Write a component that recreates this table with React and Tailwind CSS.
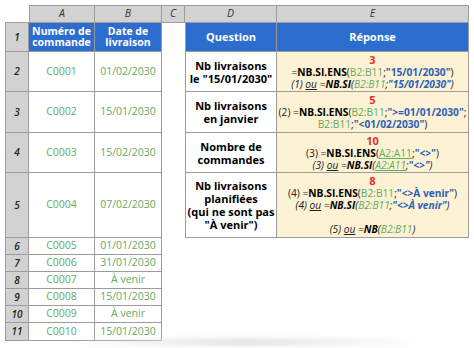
import React from "react";

const F = { fontFamily: '"Open Sans", "DejaVu Sans", sans-serif' };

const G = ({ children }) => <span className="text-[#62aa62]">{children}</span>;
const GU = ({ children }) => <span className="text-[#62aa62] underline">{children}</span>;
const Q = ({ children }) => <span className="text-[#2c5fb8] font-bold">{children}</span>;
const B = ({ children }) => <span className="font-bold text-black">{children}</span>;
const R = ({ children }) => <div className="text-[#e3302b] font-bold text-[11px]">{children}</div>;
const OU = () => <span className="underline">ou</span>;

const hdr = "bg-[#d2d2d2] border-t border-r border-[#9c9c9c] flex items-center justify-center italic text-[10.5px] text-[#333]";
const rn = "bg-[#d2d2d2] border-l border-r border-b border-[#9c9c9c] flex items-center justify-center italic font-semibold text-[10px] text-[#222]";
const cell = "border-r border-b border-[#9c9c9c] flex items-center justify-center text-[10.5px] text-[#62aa62] bg-white";
const dcell = "border-l border-r border-b border-[#9c9c9c] flex items-center justify-center text-center font-bold text-[11px] leading-[13px] text-black bg-white";
const ecell = "border-r border-b border-[#9c9c9c] flex flex-col items-center justify-center text-center text-[10.2px] leading-[12px] text-[#222] bg-[#fdf2d4] whitespace-nowrap";
const blue = "border-[#9c9c9c] bg-[#2e6dd0] text-white font-bold flex items-center justify-center text-center";

const rowsSmall = [
  ["6", "C0005", "01/01/2030"],
  ["7", "C0006", "31/01/2030"],
  ["8", "C0007", "À venir"],
  ["9", "C0008", "15/01/2030"],
  ["10", "C0009", "À venir"],
  ["11", "C0010", "15/01/2030"],
];

export default function App() {
  return (
    <div className="w-[474px] h-[348px] bg-white overflow-hidden" style={F}>
      <div className="pt-[5px] pl-[5px]">
        <div className="grid grid-cols-[24px_66px_67px_23px_92px_192px] grid-rows-[17px_30px_40px_41px_40px_65px_17px_17px_17px_17px_17px_18px]">
          {/* header row */}
          <div className="col-start-1 row-start-1" />
          <div className={`${hdr} col-start-2 row-start-1 border-l`}>A</div>
          <div className={`${hdr} col-start-3 row-start-1`}>B</div>
          <div className={`${hdr} col-start-4 row-start-1`}>C</div>
          <div className={`${hdr} col-start-5 row-start-1`}>D</div>
          <div className={`${hdr} col-start-6 row-start-1`}>E</div>

          {/* row 1 */}
          <div className={`${rn} col-start-1 row-start-2 border-t`}>1</div>
          <div className={`${blue} col-start-2 row-start-2 border-t border-r border-b text-[10.5px] leading-[11px]`}>Numéro de<br />commande</div>
          <div className={`${blue} col-start-3 row-start-2 border-t border-r border-b text-[10.5px] leading-[11px]`}>Date de<br />livraison</div>
          <div className="col-start-4 row-start-2 border-t border-[#9c9c9c] bg-white" />
          <div className={`${blue} col-start-5 row-start-2 border-t border-l border-r border-b text-[11px]`}>Question</div>
          <div className={`${blue} col-start-6 row-start-2 border-t border-r border-b text-[11px]`}>Réponse</div>

          {/* row 2 */}
          <div className={`${rn} col-start-1 row-start-3`}>2</div>
          <div className={`${cell} col-start-2 row-start-3`}>C0001</div>
          <div className={`${cell} col-start-3 row-start-3`}>01/02/2030</div>
          <div className={`${dcell} col-start-5 row-start-3`}>Nb livraisons<br />le "15/01/2030"</div>
          <div className={`${ecell} col-start-6 row-start-3`}>
            <R>3</R>
            <div>=<B>NB.SI.ENS</B>(<G>B2:B11</G>;<Q>"15/01/2030"</Q>)</div>
            <div className="italic">(1) <OU /> =<B>NB.SI</B>(<G>B2:B11</G>;<Q>"15/01/2030"</Q>)</div>
          </div>

          {/* row 3 */}
          <div className={`${rn} col-start-1 row-start-4`}>3</div>
          <div className={`${cell} col-start-2 row-start-4`}>C0002</div>
          <div className={`${cell} col-start-3 row-start-4`}>15/01/2030</div>
          <div className={`${dcell} col-start-5 row-start-4`}>Nb livraisons<br />en janvier</div>
          <div className={`${ecell} col-start-6 row-start-4`}>
            <R>5</R>
            <div>(2) =<B>NB.SI.ENS</B>(<G>B2:B11</G>;<Q>"&gt;=01/01/2030"</Q>;</div>
            <div><G>B2:B11</G>;<Q>"&lt;01/02/2030"</Q>)</div>
          </div>

          {/* row 4 */}
          <div className={`${rn} col-start-1 row-start-5`}>4</div>
          <div className={`${cell} col-start-2 row-start-5`}>C0003</div>
          <div className={`${cell} col-start-3 row-start-5`}>15/02/2030</div>
          <div className={`${dcell} col-start-5 row-start-5`}>Nombre de<br />commandes</div>
          <div className={`${ecell} col-start-6 row-start-5`}>
            <R>10</R>
            <div>(3) =<B>NB.SI.ENS</B>(<GU>A2:A11</GU>;<Q>"&lt;&gt;"</Q>)</div>
            <div className="italic">(3) <OU /> =<B>NB.SI</B>(<GU>A2:A11</GU>;<Q>"&lt;&gt;"</Q>)</div>
          </div>

          {/* row 5 */}
          <div className={`${rn} col-start-1 row-start-6`}>5</div>
          <div className={`${cell} col-start-2 row-start-6`}>C0004</div>
          <div className={`${cell} col-start-3 row-start-6`}>07/02/2030</div>
          <div className={`${dcell} col-start-5 row-start-6`}>Nb livraisons<br />planifiées<br />(qui ne sont pas<br />"À venir")</div>
          <div className={`${ecell} col-start-6 row-start-6`}>
            <R>8</R>
            <div>(4) =<B>NB.SI.ENS</B>(<G>B2:B11</G>;<Q>"&lt;&gt;À venir"</Q>)</div>
            <div className="italic">(4) <OU /> =<B>NB.SI</B>(<G>B2:B11</G>;<Q>"&lt;&gt;À venir"</Q>)</div>
            <div className="h-[12px]" />
            <div className="italic">(5) <OU /> =<B>NB</B>(<G>B2:B11</G>)</div>
          </div>

          {rowsSmall.map((r, i) => (
            <React.Fragment key={r[0]}>
              <div className={rn} style={{ gridColumn: 1, gridRow: 7 + i }}>{r[0]}</div>
              <div className={cell} style={{ gridColumn: 2, gridRow: 7 + i }}>{r[1]}</div>
              <div className={cell} style={{ gridColumn: 3, gridRow: 7 + i }}>{r[2]}</div>
            </React.Fragment>
          ))}
        </div>
        <div className="mt-[-3px] ml-[60px] w-[360px] h-[8px] bg-gradient-to-r from-transparent via-[#e4e4e4] to-transparent blur-[2px]" />
      </div>
    </div>
  );
}
